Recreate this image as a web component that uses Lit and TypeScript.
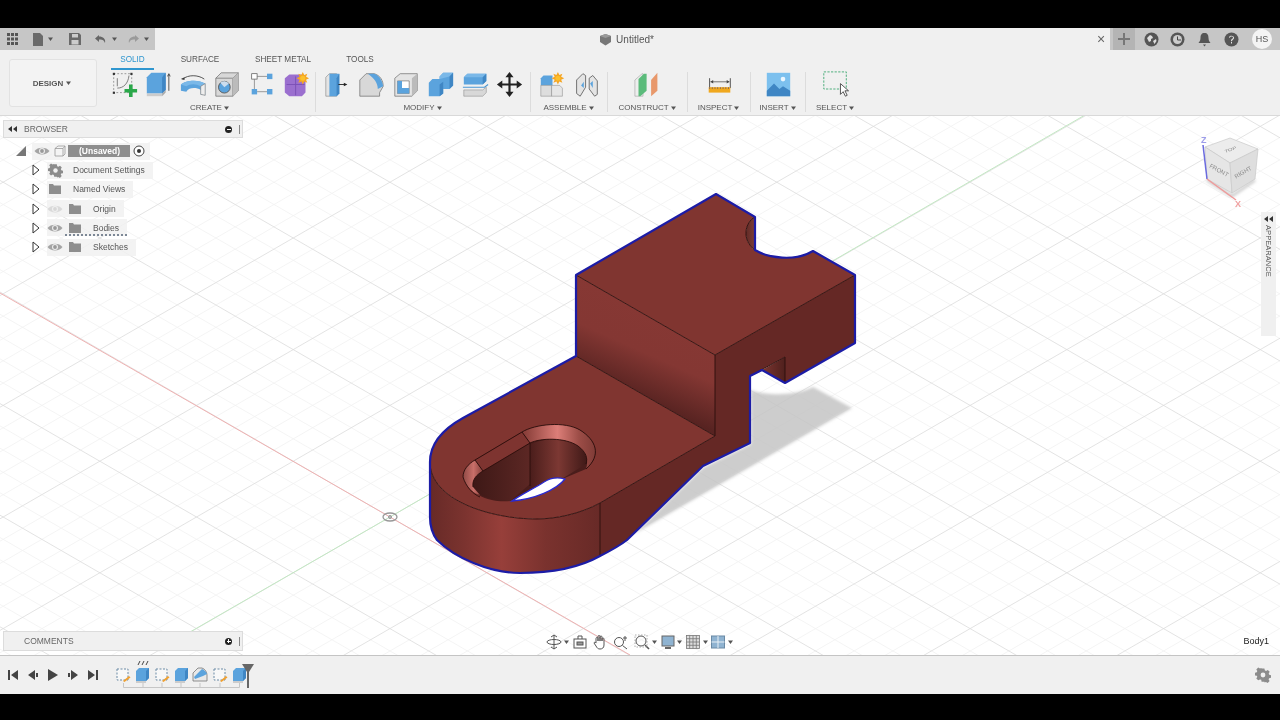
import { LitElement, html, svg, css } from 'lit';
import { customElement } from 'lit/decorators.js';

const BLUE = '#5ba3dd';
const BLUE_D = '#3f86c4';
const GREY = '#d8d8d8';
const EDGE = '#6e6e6e';

const caret = html`<svg class="caret" width="9" height="8" viewBox="0 0 9 8"><path d="M2 2.500h5L4.500 6z" fill="#555"/></svg>`;

// ribbon icons, all 30x30
const sun = (x: number, y: number) => svg`<g transform="translate(${x} ${y})"><path d="M0-7L1.600-3.600 5-5 3.600-1.600 7 0 3.600 1.600 5 5 1.600 3.600 0 7-1.600 3.600-5 5-3.600 1.600-7 0-3.600-1.600-5-5-1.600-3.600z" fill="#f5a623"/><circle r="2.800" fill="#fbc02d"/></g>`;

const ribbonIcons: Record<string, unknown> = {
  sketch: html`<svg width="30" height="30" viewBox="0 0 30 30"><rect x="3" y="3" width="20" height="21" fill="none" stroke="#777" stroke-dasharray="2 2" stroke-width=".8"/><path d="M7 8v9M7 19c7 0 12-5 13-14" fill="none" stroke="#666" stroke-width=".9"/><g fill="#333"><rect x="2" y="2" width="2.400" height="2.400"/><rect x="21.500" y="2" width="2.400" height="2.400"/><rect x="2" y="23" width="2.400" height="2.400"/></g><path d="M20 15h4v5h5v4h-5v5h-4v-5h-5v-4h5z" fill="#2aa84a"/></svg>`,
  extrude: html`<svg width="30" height="30" viewBox="0 0 30 30"><path d="M2 7l5-5h16v19l-4 4H2z" fill="${BLUE}"/><path d="M19 25V7l4-5v19z" fill="${BLUE_D}"/><path d="M2 25h17v3H2z" fill="#ccc"/><path d="M19 28v-3l4-4v3z" fill="#aaa"/><path d="M26.500 22V4M25 6l1.500-3L28 6" fill="none" stroke="#333" stroke-width=".9"/></svg>`,
  revolve: html`<svg width="30" height="30" viewBox="0 0 30 30"><path d="M1 15c5-5 20-6 27-1v13l-5-1v-5c-5-3-13-3-16 2l-6-1z" fill="${BLUE}"/><path d="M1 15c5-5 20-6 27-1l-5 3c-5-3-12-3-16 0z" fill="#7ab8e8"/><path d="M23 17l5-3v13l-5-1z" fill="#eee" stroke="#777" stroke-width=".7"/><path d="M3 9c6-5 17-5 24 0" fill="none" stroke="#444"/><path d="M1 9l4-2v3z" fill="#333"/></svg>`,
  hole: html`<svg width="30" height="30" viewBox="0 0 30 30"><path d="M2 8l6-6h19v20l-6 6H2z" fill="${GREY}" stroke="${EDGE}" stroke-width=".8"/><path d="M2 8h19v20M21 8l6-6" fill="none" stroke="${EDGE}" stroke-width=".8"/><path d="M21 8l6-6v20l-6 6z" fill="#bbb"/><circle cx="11.500" cy="18" r="6.500" fill="${BLUE}" stroke="#555"/><path d="M11.500 18l5-4A6.500 6.500 0 0 0 7 13z" fill="#cde"/></svg>`,
  pattern: html`<svg width="30" height="30" viewBox="0 0 30 30"><rect x="3" y="3" width="6" height="6" fill="#fff" stroke="#555" stroke-width=".8"/><rect x="20" y="3" width="6" height="6" fill="${BLUE}"/><rect x="3" y="20" width="6" height="6" fill="${BLUE}"/><rect x="20" y="20" width="6" height="6" fill="${BLUE}"/><path d="M9 6h11M9 23h11M6 9v11" stroke="#777" stroke-width=".8"/></svg>`,
  solid: html`<svg width="30" height="30" viewBox="0 0 30 30"><path d="M2 8l5-4h14l4 5v15l-4 4H7l-5-4z" fill="#9b6fcf"/><path d="M4 15h20M14 6v21" stroke="#7b4fb5"/>${sun(22, 8)}</svg>`,
  press: html`<svg width="30" height="30" viewBox="0 0 30 30"><path d="M2 7l4-4h8v25H2z" fill="#e4e4e4" stroke="#888" stroke-width=".7"/><path d="M6 3h11v22l-3 3H6z" fill="${BLUE}"/><path d="M14 28V8l3-5v22z" fill="${BLUE_D}"/><path d="M16 15h7" stroke="#222"/><path d="M22 13l4 2-4 2z" fill="#222"/></svg>`,
  fillet: html`<svg width="30" height="30" viewBox="0 0 30 30"><path d="M2 10l7-7h9c7 2 10 8 10 14l-4 7v4H2z" fill="${GREY}" stroke="${EDGE}" stroke-width=".8"/><path d="M11 3h7c6 2 9 8 10 14l-6 3c0-7-4-12-11-17z" fill="${BLUE}"/></svg>`,
  shell: html`<svg width="30" height="30" viewBox="0 0 30 30"><path d="M2 8l6-5h19v19l-6 6H2z" fill="#e4e4e4" stroke="${EDGE}" stroke-width=".8"/><path d="M21 8l6-5v19l-6 6z" fill="#bbb"/><path d="M5 11h13v14H5z" fill="#fff" stroke="#666" stroke-width=".7"/><path d="M5 11h5v8h8v6H5z" fill="${BLUE}"/></svg>`,
  combine: html`<svg width="30" height="30" viewBox="0 0 30 30"><path d="M2 13l4-4h8V6l4-4h11v14l-4 4h-7v5l-4 3H2z" fill="${BLUE}"/><path d="M14 9V6l4-4h11l-4 4z" fill="#7ab8e8"/><path d="M25 20V6l4-4v14zM14 28V15l4-3v13z" fill="${BLUE_D}"/></svg>`,
  split: html`<svg width="30" height="30" viewBox="0 0 30 30"><path d="M2 7l4-4h21v8l-4 4H2z" fill="${BLUE}"/><path d="M2 7h21l4-4H6z" fill="#7ab8e8"/><path d="M23 15V7l4-4v8z" fill="${BLUE_D}"/><path d="M1 18h24l4-3" fill="none" stroke="#4a97d3" stroke-width="1.200"/><path d="M2 21h21l4-3v6l-4 4H2z" fill="${GREY}" stroke="#888" stroke-width=".6"/></svg>`,
  move: html`<svg width="30" height="30" viewBox="0 0 30 30"><path d="M15 1l4.500 6H16.200v6.800H23V10.500l6 4.500-6 4.500v-3.300h-6.800V23h3.300L15 29l-4.500-6h3.300v-6.800H7v3.300L1 15l6-4.500v3.300h6.800V7h-3.300z" fill="#222"/></svg>`,
  component: html`<svg width="30" height="30" viewBox="0 0 30 30"><path d="M2 8l3-3h10v11H2z" fill="${BLUE}"/><path d="M2 16h12v12H2z" fill="#ddd" stroke="#888" stroke-width=".6"/><path d="M14 16h9l3 3v9H14z" fill="#e6e6e6" stroke="#888" stroke-width=".6"/>${sun(21, 8)}</svg>`,
  joint: html`<svg width="30" height="30" viewBox="0 0 30 30"><path d="M4 10l7-7 3 2v13l-6 10-4-3z" fill="#e4e4e4" stroke="#666"/><path d="M18 8l4-3 5 6v15l-3 2-6-8z" fill="#e4e4e4" stroke="#666"/><path d="M9 16l3-4v7zM19 14l3-3v8z" fill="${BLUE}"/></svg>`,
  construct: html`<svg width="30" height="30" viewBox="0 0 30 30"><path d="M1 10l8-7h1v25H1z" fill="#eee" stroke="#999" stroke-width=".6"/><path d="M5 9l6-6h3v19l-7 6H5z" fill="#5bbb7b"/><path d="M19 10l7-8v20l-7 6z" fill="#e8986b"/></svg>`,
  inspect: html`<svg width="30" height="30" viewBox="0 0 30 30"><path d="M4 8v11M27 8v11" stroke="#444"/><path d="M5 12h21" stroke="#444" stroke-width=".8"/><path d="M5 12l3-2v4zM26 12l-3-2v4z" fill="#444"/><rect x="3" y="18" width="24" height="6" fill="#f0a81e"/><path d="M4 18v2M7 18v2M10 18v2M13 18v2M16 18v2M19 18v2M22 18v2M25 18v2" stroke="#865"/></svg>`,
  insert: html`<svg width="30" height="30" viewBox="0 0 30 30"><rect x="2" y="2" width="26" height="26" fill="#7cc0ee"/><circle cx="20" cy="9" r="2.600" fill="#eaf6ff"/><path d="M2 22l8-8 6 6 4-3 8 5v6H2z" fill="#3f86c4"/></svg>`,
  select: html`<svg class="over" width="30" height="30" viewBox="0 0 30 30"><rect x="2" y="1" width="25" height="19" fill="none" stroke="#3fa873" stroke-dasharray="2.500 1.500"/><path d="M20.500 14v12l3-3 2.500 5 2-1-2.500-5h4z" fill="#fff" stroke="#333" stroke-width=".9"/></svg>`,
};

const groups = [
  { label: 'CREATE', width: 211, icons: ['sketch', 'extrude', 'revolve', 'hole', 'pattern', 'solid'], cls: '' },
  { label: 'MODIFY', width: 215, icons: ['press', 'fillet', 'shell', 'combine', 'split', 'move'], cls: '' },
  { label: 'ASSEMBLE', width: 77, icons: ['component', 'joint'], cls: '' },
  { label: 'CONSTRUCT', width: 80, icons: ['construct'], cls: '' },
  { label: 'INSPECT', width: 63, icons: ['inspect'], cls: '' },
  { label: 'INSERT', width: 55, icons: ['insert'], cls: '' },
  { label: 'SELECT', width: 60, icons: ['select'], cls: 'last' },
];

const eye = (faint = false) => html`<svg class="${faint ? 'faint' : ''}" width="16" height="12" viewBox="0 0 16 12"><path d="M.5 6C3.500 1.500 12.500 1.500 15.500 6 12.500 10.500 3.500 10.500.5 6z" fill="#a4a4a4"/><circle cx="8" cy="6" r="3" fill="#ececec"/><circle cx="8" cy="6" r="1.900" fill="#999"/></svg>`;
const folder = html`<svg width="16" height="12" viewBox="0 0 16 12"><path d="M2 1h4l1 1.500h7V11H2z" fill="#8e8e8e"/></svg>`;
const gear = (c = '#8c8c8c', s = 16) => html`<svg width="${s}" height="${s}" viewBox="0 0 16 16"><path d="M6.600 1h2.800l.4 2 1.200.6 1.800-1 1.900 2-1 1.700.5 1.200 1.800.6v2.800l-1.900.4-.5 1.200 1 1.700-1.900 2-1.800-1-1.200.5L9.400 15H6.600l-.4-2-1.200-.5-1.800 1-1.900-2 1-1.700-.5-1.200L0 8.400V5.600l1.800-.6.500-1.200-1-1.700 1.900-2 1.800 1 1.200-.6z" transform="translate(0 .5) scale(1 .95)" fill="${c}"/><circle cx="8" cy="8" r="2.400" fill="#f0f0f0"/></svg>`;
const chev = html`<svg width="10" height="12" viewBox="0 0 10 12"><path d="M2 1l6 5-6 5z" fill="#fff" stroke="#333" stroke-width="1"/></svg>`;

const treeRows = [
  { name: 'Document Settings', first: gear('#8c8c8c', 15), nested: false, dashed: false },
  { name: 'Named Views', first: folder, nested: false, dashed: false },
  { name: 'Origin', first: eye(true), nested: true, dashed: false },
  { name: 'Bodies', first: eye(), nested: true, dashed: true },
  { name: 'Sketches', first: eye(), nested: true, dashed: false },
];

// timeline feature icons
const tlSketch = html`<svg width="18" height="18" viewBox="0 0 18 18"><rect x="3" y="3" width="11" height="11" fill="#f8f8f8" stroke="#6a8aa5" stroke-dasharray="2 1.500"/><path d="M9 15l6-5 1.500 1.500-6 4.500z" fill="#f0a030"/></svg>`;
const tlExtrude = html`<svg width="18" height="18" viewBox="0 0 18 18"><path d="M3 5l3-3h10v10l-3 3H3z" fill="${BLUE}"/><path d="M13 15V5l3-3v10z" fill="${BLUE_D}"/><path d="M3 15h10v2H3z" fill="#ccc"/></svg>`;
const tlFillet = html`<svg width="18" height="18" viewBox="0 0 18 18"><path d="M2 7l5-5h4c3 1 5 4 5 7v6H2z" fill="#e8e8e8" stroke="#777" stroke-width=".8"/><path d="M3 11L11 3c3 1 4 3 5 5l-4 2-8 3z" fill="${BLUE}"/></svg>`;
const timelineItems = [tlSketch, tlExtrude, tlSketch, tlExtrude, tlFillet, tlSketch, tlExtrude];

// isometric floor grid around the origin at 390,517, in page coordinates
const ORIGIN = { x: 390, y: 517 };
const SLOPE = 55.8 / 96.7;
const STEP = 111.6 / 5;
function gridPaths() {
  let major = '';
  let minor = '';
  for (const dir of [1, -1]) {
    for (let k = -70; k <= 70; k++) {
      const y0 = ORIGIN.y + dir * SLOPE * (0 - ORIGIN.x) + k * STEP;
      const y1 = ORIGIN.y + dir * SLOPE * (1280 - ORIGIN.x) + k * STEP;
      const seg = `M0 ${y0.toFixed(1)}L1280 ${y1.toFixed(1)}`;
      if (k % 5 === 0) major += seg;
      else minor += seg;
    }
  }
  return { major, minor };
}

@customElement('app-root')
export class AppRoot extends LitElement {
  static styles = css`
    :host {
      display: block;
      width: 1280px;
      height: 720px;
      overflow: hidden;
      background: #000;
      font-family: 'Liberation Sans', Arial, sans-serif;
      color: #555;
      filter: blur(.3px);
    }
    .black { height: 28px; background: #000; }
    .black.bottom { height: 26px; }
    svg { display: block; flex: none; }

    .titlebar { display: flex; height: 22px; background: #c6c6c6; }
    .qa { width: 155px; display: flex; align-items: center; padding-left: 6px; box-sizing: border-box; }
    .qa .caret { margin-left: 2px; }
    .qa .m7 { margin-left: 7px; }
    .qa .m12 { margin-left: 12px; }
    .qa .m13 { margin-left: 13px; }
    .tab { flex: 1; display: flex; align-items: center; background: #f0f0f0; }
    .title { flex: 1; display: flex; align-items: center; justify-content: center; gap: 4px; font-size: 10px; padding-left: 6px; }
    .close { width: 18px; font-size: 14px; color: #666; text-align: center; }
    .actions { width: 170px; display: flex; align-items: center; }
    .plus { width: 22px; height: 22px; margin-left: 3px; background: #b4b4b4; display: flex; align-items: center; justify-content: center; }
    .act { margin-left: 11.700px; }
    .plus + .act { margin-left: 8.500px; }
    .avatar { width: 20px; height: 20px; border-radius: 50%; background: #f4f4f4; font-size: 9px; line-height: 20px; text-align: center; margin-left: 13.500px; color: #555; }

    .ribbon { display: flex; height: 65px; background: #f0f0f0; border-bottom: 1px solid #d9d9d9; }
    .design { width: 88px; height: 48px; margin: 9px 0 0 9px; box-sizing: border-box; border: 1px solid #e2e2e2; border-radius: 3px; background: #f3f3f3; display: flex; align-items: center; justify-content: center; gap: 1px; font-size: 8px; font-weight: bold; color: #555; }
    .rcol { margin-left: 8px; }
    .tabs { display: grid; grid-template-columns: 43px 92px 74px 80px; height: 20px; margin-left: 6px; font-size: 8.200px; text-align: center; line-height: 19px; }
    .tabs .on { color: #2f96cf; border-bottom: 2px solid #2f96cf; height: 18px; }
    .groups { display: flex; height: 44px; }
    .group { position: relative; box-sizing: border-box; display: flex; flex-direction: column; align-items: center; }
    .group::after { content: ''; position: absolute; right: 0; top: 2px; bottom: 2px; width: 1px; background: #dcdcdc; }
    .group.last::after { display: none; }
    .icons { display: flex; flex: none; height: 30px; padding-top: 1px; }
    .icon { width: 34.400px; display: flex; justify-content: center; }
    .icon svg { width: 27px; height: 27px; }
    .icon svg.over { overflow: visible; }
    .glabel { display: flex; flex: none; align-items: center; height: 13px; font-size: 8px; color: #555; }

    .view { position: relative; height: 539px; background: #fff; overflow: hidden; }
    .scene { position: absolute; inset: 0; }

    .panel { position: absolute; left: 3px; width: 240px; box-sizing: border-box; background: #f0f0f0; border: 1px solid #dcdcdc; display: flex; align-items: center; font-size: 8.500px; color: #666; }
    .browser { top: 4px; height: 18px; }
    .comments { top: 515px; height: 20px; }
    .panel .back { width: 18px; margin-left: 1px; padding-left: 3px; box-sizing: border-box; }
    .panel .name { flex: 1; margin-left: 1px; }
    .panel .bar { width: 1px; height: 9px; background: #888; margin: 0 2px 0 7px; }
    .dot { width: 7px; height: 7px; border-radius: 50%; background: #222; position: relative; }
    .dot::after { content: ''; position: absolute; left: 1.500px; right: 1.500px; top: 3px; height: 1px; background: #fff; }
    .dot.add::before { content: ''; position: absolute; top: 1.500px; bottom: 1.500px; left: 3px; width: 1px; background: #fff; }

    .tree { position: absolute; left: 0; top: 25.500px; font-size: 8.500px; color: #555; }
    .row { display: flex; align-items: center; height: 19.200px; padding-left: 31px; }
    .item { position: relative; display: flex; align-items: center; height: 17px; margin-left: 6px; background: rgba(241, 241, 241, .85); padding-right: 8px; }
    .item .slot { width: 16px; display: flex; justify-content: center; }
    .item .slot2 { margin-left: 4px; }
    .item .txt { margin-left: 10px; }
    .item.dashed::after { content: ''; position: absolute; left: 18px; right: 0; bottom: 0; border-bottom: 2px dotted #7d8896; }
    .faint { opacity: .3; }
    .root { padding-left: 16px; }
    .root .item { margin-left: 6px; padding: 0 5px 0 1px; }
    .root .item .slot { width: 18px; }
    .unsaved { display: flex; align-items: center; width: 78px; height: 12px; margin-left: 1px; background: #8e8e8e; color: #fff; font-weight: bold; }
    .unsaved span { margin-left: 11px; }
    .radio { margin-left: 3px; }

    .cubeview { position: absolute; right: 21px; top: 14px; }
    .side { position: absolute; right: 4px; top: 96px; width: 15px; height: 124px; background: #f0f0f0; display: flex; flex-direction: column; align-items: center; padding-top: 4px; box-sizing: border-box; }
    .side span { writing-mode: vertical-rl; font-size: 7.600px; margin-top: 3px; color: #555; }

    .nav { position: absolute; left: 546px; top: 517px; display: flex; align-items: center; height: 17px; }
    .nav .caret { width: 9px; }
    .m1 { margin-left: 1px; }
    .m4 { margin-left: 4px; }
    .m5 { margin-left: 5px; }
    .mn1 { margin-left: -1px; }
    .body-name { position: absolute; right: 11px; top: 520px; font-size: 9px; color: #222; }

    .timeline { display: flex; align-items: center; height: 39px; box-sizing: border-box; background: #f0f0f0; border-top: 1px solid #c4c4c4; padding-left: 3px; }
    .ctrl { width: 20px; display: flex; justify-content: center; }
    .features { position: relative; display: flex; margin-left: 10.500px; height: 36px; align-items: center; }
    .feat { width: 19.300px; display: flex; justify-content: center; }
    .rail { position: absolute; left: 9.500px; top: 26px; }
    .hatch { position: absolute; left: 23px; top: 3px; }
    .scrub { position: absolute; left: 128.500px; top: 7px; }
    .tgear { margin-left: auto; margin-right: 9px; }
  `;

  renderTitlebar() {
    return html`<div class="titlebar">
      <div class="qa">
        <svg width="14" height="12" viewBox="0 0 14 12" fill="#555"><path d="M1 0h3v3H1zM5 0h3v3H5zM9 0h3v3H9zM1 4.500h3v3H1zM5 4.500h3v3H5zM9 4.500h3v3H9zM1 9h3v3H1zM5 9h3v3H5zM9 9h3v3H9z"/></svg>
        <svg class="m12" width="12" height="14" viewBox="0 0 12 14"><path d="M1 1h7l3 3v10H1z" fill="#6a6a6a"/></svg>
        ${caret}
        <svg class="m13" width="14" height="14" viewBox="0 0 14 14"><path d="M1 1h10l2 2v10H1z" fill="#6a6a6a"/><rect x="4" y="2" width="6" height="3.500" fill="#ccc"/><rect x="3.500" y="8" width="7" height="4.500" fill="#ccc"/></svg>
        <svg class="m12" width="14" height="12" viewBox="0 0 14 12"><path d="M5 2L1 5.500 5 9V6.500c3-.5 5 .5 6 3.500 1-4-2-6.500-6-6.500z" fill="#666"/></svg>
        ${caret}
        <svg class="m7" width="14" height="12" viewBox="0 0 14 12"><path d="M9 2l4 3.500L9 9V6.500c-3-.5-5 .5-6 3.500-1-4 2-6.500 6-6.500z" fill="#9a9a9a"/></svg>
        ${caret}
      </div>
      <div class="tab">
        <div class="title">
          <svg width="13" height="13" viewBox="0 0 13 13"><path d="M1 3l5.500-2L12 3v6l-5.500 3.500L1 9z" fill="#777"/><path d="M1 3l5.500 2L12 3 6.500 1z" fill="#999"/></svg>
          <span>Untitled*</span>
        </div>
        <div class="close">×</div>
      </div>
      <div class="actions">
        <div class="plus"><svg width="12" height="12" viewBox="0 0 12 12"><path d="M5 0h2v5h5v2H7v5H5V7H0V5h5z" fill="#777"/></svg></div>
        <svg class="act" width="15" height="15" viewBox="0 0 15 15"><circle cx="7.500" cy="7.500" r="7" fill="#555"/><path d="M3 6l3-3 2 1 1 2-2 1v2l-2 1-1-2zM9 9l3-2 .5 2-2 3z" fill="#ddd"/></svg>
        <svg class="act" width="15" height="15" viewBox="0 0 15 15"><circle cx="7.500" cy="7.500" r="7" fill="#555"/><circle cx="7.500" cy="7.500" r="4.500" fill="#ccc"/><path d="M7.500 4.500v3.500H11" fill="none" stroke="#444"/></svg>
        <svg class="act" width="15" height="15" viewBox="0 0 15 15"><path d="M7.500 1c-3 0-4 2-4 5 0 3-1.500 4-2 5h12c-.5-1-2-2-2-5 0-3-1-5-4-5z" fill="#555"/><path d="M6 12.500h3L7.500 14.500z" fill="#555"/></svg>
        <svg class="act" width="15" height="15" viewBox="0 0 15 15"><circle cx="7.500" cy="7.500" r="7" fill="#555"/><path d="M5 5.500C5 3 10 3 10 5.700c0 2-2 1.800-2 3.500H7c0-2.500 2-2.300 2-3.700C9 4.300 6 4.300 6 5.700z" fill="#e8e8e8"/><rect x="7" y="10" width="1" height="1.500" fill="#e8e8e8"/></svg>
        <div class="avatar">HS</div>
      </div>
    </div>`;
  }

  renderRibbon() {
    return html`<div class="ribbon">
      <div class="design">DESIGN ${caret}</div>
      <div class="rcol">
        <div class="tabs">
          <div class="on">SOLID</div><div>SURFACE</div><div>SHEET METAL</div><div>TOOLS</div>
        </div>
        <div class="groups">
          ${groups.map(g => html`<div class="group ${g.cls}" style="width:${g.width}px">
            <div class="icons">${g.icons.map(i => html`<div class="icon">${ribbonIcons[i]}</div>`)}</div>
            <div class="glabel">${g.label} ${caret}</div>
          </div>`)}
        </div>
      </div>
    </div>`;
  }

  renderScene() {
    const { major, minor } = gridPaths();
    const line = '#2a0d0b';
    return html`<svg class="scene" width="1280" height="539" viewBox="0 116 1280 539">
      <defs>
        <filter id="soft" x="-10%" y="-10%" width="120%" height="120%"><feGaussianBlur stdDeviation="1.500"/></filter>
        <linearGradient id="front" gradientUnits="userSpaceOnUse" x1="430" y1="0" x2="600" y2="0">
          <stop offset="0" stop-color="#672a27"/><stop offset=".2" stop-color="#7b332f"/><stop offset=".42" stop-color="#973f3a"/>
          <stop offset=".68" stop-color="#7a322e"/><stop offset="1" stop-color="#682a27"/>
        </linearGradient>
        <linearGradient id="wall" gradientUnits="userSpaceOnUse" x1="660" y1="300" x2="620" y2="390">
          <stop offset="0" stop-color="#873834"/><stop offset=".55" stop-color="#843733"/><stop offset="1" stop-color="#572321"/>
        </linearGradient>
        <linearGradient id="notch" gradientUnits="userSpaceOnUse" x1="744" y1="0" x2="756" y2="0">
          <stop offset="0" stop-color="#5a2522"/><stop offset="1" stop-color="#804039"/>
        </linearGradient>
        <linearGradient id="slotR" gradientUnits="userSpaceOnUse" x1="530" y1="0" x2="587" y2="0">
          <stop offset="0" stop-color="#4a1d1b"/><stop offset=".5" stop-color="#7c3833"/><stop offset="1" stop-color="#3f1917"/>
        </linearGradient>
        <linearGradient id="slotL" gradientUnits="userSpaceOnUse" x1="473" y1="0" x2="530" y2="0">
          <stop offset="0" stop-color="#3d1816"/><stop offset="1" stop-color="#5c2724"/>
        </linearGradient>
        <linearGradient id="chamfer" gradientUnits="userSpaceOnUse" x1="525" y1="0" x2="597" y2="0">
          <stop offset="0" stop-color="#8a3f3a"/><stop offset=".45" stop-color="#dc7e78"/><stop offset=".75" stop-color="#9c4d47"/><stop offset="1" stop-color="#7d3a35"/>
        </linearGradient>
        <linearGradient id="chamferL" gradientUnits="userSpaceOnUse" x1="463" y1="0" x2="484" y2="0">
          <stop offset="0" stop-color="#8f4a45"/><stop offset=".5" stop-color="#c96f69"/><stop offset="1" stop-color="#7d3a35"/>
        </linearGradient>
        <linearGradient id="inner" gradientUnits="userSpaceOnUse" x1="762" y1="0" x2="785" y2="0">
          <stop offset="0" stop-color="#7d3631"/><stop offset="1" stop-color="#4f201d"/>
        </linearGradient>
      </defs>

      <path d="${minor}" stroke="#f1f1f1" stroke-width=".8" fill="none"/>
      <path d="${major}" stroke="#dcdcdc" stroke-width=".8" fill="none"/>
      <path d="M0 293L390 517L630 655" stroke="#efb1b1" stroke-width="1" fill="none"/>
      <path d="M190 632L390 517L1085 115" stroke="#c3e8c3" stroke-width="1" fill="none"/>
      <g fill="none" stroke="#999"><ellipse cx="390" cy="517" rx="7" ry="4" stroke-width="1.300"/><circle cx="390" cy="517" r="1.500" fill="#bbb"/></g>

      <path d="M751 390C765 396 795 396 813 387L852 408L634 534L703 468L751 444Z" fill="#c4c4c4" fill-opacity=".85" filter="url(#soft)"/>

      <!-- right faces -->
      <path d="M715 355L855 275V343L785 383V357L750 376V443L703 466L627 540C618 547 608 552 600 556V503L715 436Z" fill="#652825"/>
      <path d="M762 370L785 357V383Z" fill="url(#inner)"/>
      <!-- block wall -->
      <path d="M576 275L715 355V436L576 356Z" fill="url(#wall)"/>
      <!-- block top -->
      <path d="M576 275L716 194L755 217C745 222 741 240 755 250C768 258 795 262 813 251L855 275L715 355Z" fill="#803530"/>
      <path d="M755 217C745 222 741 240 755 250Z" fill="url(#notch)"/>
      <!-- plate top -->
      <path d="M576 356L715 436L600 503C580 514 555 519 537 519C490 519 430 500 430 462C430 442 445 428 463 418Z" fill="#803530"/>
      <!-- round front -->
      <path d="M430 462C430 500 490 519 537 519C555 519 580 514 600 503V556C575 570 545 573 520 573C490 573 455 558 437 540C431 532 430 525 430 517Z" fill="url(#front)"/>

      <!-- slot -->
      <path d="M475 460L522 432C535 424 565 421 580 430C596 440 602 455 586 469L510 501C490 503 470 495 463 477C463 470 468 464 475 460Z" fill="#4a1d1b"/>
      <path d="M530 445C540 438 565 437 578 446C586 452 588 458 586 464L560 480L530 490Z" fill="url(#slotR)"/>
      <path d="M483 471L530 443V484L510 501C495 500 478 498 473 487C472 480 476 475 483 471Z" fill="url(#slotL)"/>
      <path d="M522 432C535 424 565 421 580 430C596 440 602 455 586 469C589 460 586 452 578 446C565 437 540 438 530 443Z" fill="url(#chamfer)"/>
      <path d="M475 460L483 471C476 475 472 480 473 487L480 495C470 492 465 484 463 477C463 470 468 464 475 460Z" fill="url(#chamferL)"/>
      <path d="M475 460L522 432L530 443L483 471Z" fill="#7e3430"/>
      <path d="M512 501C522 494 533 489 544 482C550 478 558 477 565 479C556 490 535 499 512 501Z" fill="#fff" stroke="#2a2ad0" stroke-width="1.300"/>

      <!-- edges -->
      <g fill="none" stroke="${line}" stroke-width=".9">
        <path d="M576 275L715 355L855 275M715 355V436M576 356L715 436M600 503V556M785 357V383M750 376L785 357"/>
        <path d="M755 217C745 222 741 240 755 250"/>
        <path d="M430 462C430 500 490 519 537 519C555 519 580 514 600 503L715 436"/>
        <path d="M475 460L522 432C535 424 565 421 580 430C596 440 602 455 586 469M475 460C468 464 463 470 463 477C466 487 473 494 480 497"/>
        <path d="M522 432L530 443M475 460L483 471M483 471L530 443C540 438 565 437 578 446C586 452 588 458 586 464M483 471C476 475 472 480 473 487M530 443V486"/>
      </g>
      <path d="M576 275L716 194L755 217V250C768 258 795 262 813 251L855 275V343L785 383L762 370L750 376V443L703 466L627 540C618 547 608 552 600 556C575 570 545 573 520 573C490 573 455 558 437 540C431 532 430 525 430 517V462C430 442 445 428 463 418L576 356Z" fill="none" stroke="#1c1ca6" stroke-width="2.200" stroke-linejoin="round"/>
    </svg>`;
  }

  renderCube() {
    return html`<svg class="cubeview" width="62" height="80" viewBox="0 0 62 80">
      <defs><filter id="cs"><feGaussianBlur stdDeviation="1.500"/></filter></defs>
      <path d="M10 50L35 66L58 50" fill="none" stroke="#ccc" stroke-width="3" filter="url(#cs)"/>
      <path d="M33 8L61 19L33 33L8 17Z" fill="#ececec" stroke="#c9c9c9" stroke-width=".7"/>
      <path d="M8 17L33 33L35 63L10 49Z" fill="#e6e6e6" stroke="#c9c9c9" stroke-width=".7"/>
      <path d="M33 33L61 19L58 49L35 63Z" fill="#dedede" stroke="#c9c9c9" stroke-width=".7"/>
      <g fill="#8a8a8a" font-size="6" font-family="Liberation Sans, sans-serif" text-anchor="middle">
        <text transform="translate(34 21) rotate(-20) scale(1 .7)">TOP</text>
        <text transform="translate(21 42) rotate(28)">FRONT</text>
        <text transform="translate(47 44) rotate(-30)">RIGHT</text>
      </g>
      <path d="M6 15L10 49" stroke="#6a6adf" stroke-width="1.500"/>
      <path d="M10 49L39 70" stroke="#ef9a9a" stroke-width="1.500"/>
      <text x="4" y="13" font-size="9" font-weight="bold" font-family="Liberation Sans, sans-serif" fill="#9d9dea">Z</text>
      <text x="38" y="77" font-size="9" font-weight="bold" font-family="Liberation Sans, sans-serif" fill="#f0a0a0">X</text>
    </svg>`;
  }

  renderNav() {
    return html`<div class="nav">
      <svg width="16" height="16" viewBox="0 0 16 16" fill="none" stroke="#555"><path d="M8 1v14M5 3l3-2 3 2M5 13l3 2 3-2"/><ellipse cx="8" cy="8" rx="7" ry="2.500"/></svg>${caret}
      <svg class="m1" width="16" height="16" viewBox="0 0 16 16" fill="none" stroke="#555"><rect x="2" y="5" width="12" height="9"/><rect x="5" y="8" width="6" height="3" fill="#999"/><path d="M6 5V2h4v3"/></svg>
      <svg class="m4" width="16" height="16" viewBox="0 0 16 16" fill="none" stroke="#555"><path d="M4 9V4.500a1 1 0 0 1 2 0V7V2.500a1 1 0 0 1 2 0V7V3a1 1 0 0 1 2 0v4V5a1 1 0 0 1 2 0v6c0 3-2 4-4 4s-3-1-4-3L2 9c0-1 1.500-1 2 0z"/></svg>
      <svg class="m5" width="16" height="16" viewBox="0 0 16 16" fill="none" stroke="#555"><circle cx="6" cy="8" r="4.500"/><path d="M9.500 11.500L14 15M12 2v5M10 4h4" /></svg>
      <svg class="m5" width="16" height="16" viewBox="0 0 16 16" fill="none" stroke="#555"><circle cx="7" cy="7" r="5"/><path d="M11 11l4 4" stroke-width="1.600"/><rect x="1" y="1" width="12" height="12" stroke="#999" stroke-dasharray="1.500 1.500" stroke-width=".8"/></svg>${caret}
      <svg class="m1" width="16" height="16" viewBox="0 0 16 16"><rect x="2" y="2" width="12" height="10" fill="#8fb3d1" stroke="#666"/><path d="M5 14h6" stroke="#666" stroke-width="2"/></svg>
      <span class="mn1">${caret}</span>
      <svg class="m1" width="16" height="16" viewBox="0 0 16 16" fill="#ddd" stroke="#777" stroke-width=".8"><rect x="1.500" y="1.500" width="13" height="13"/><path d="M4.700 1.500v13M8 1.500v13M11.300 1.500v13M1.500 4.700h13M1.500 8h13M1.500 11.300h13" fill="none"/></svg>${caret}
      <svg width="16" height="16" viewBox="0 0 16 16"><rect x="1.500" y="2" width="13" height="12" fill="#8fb3d1" stroke="#6a8aa5"/><path d="M8 2v12M1.500 8h13" stroke="#e8f0f6"/></svg>${caret}
    </div>`;
  }

  renderTimeline() {
    return html`<div class="timeline">
      <div class="ctrl"><svg width="12" height="12" viewBox="0 0 12 12" fill="#444"><path d="M1 1h2v10H1zM11 1v10L4 6z"/></svg></div>
      <div class="ctrl"><svg width="12" height="12" viewBox="0 0 12 12" fill="#444"><path d="M8 1v10L1 6zM9 4h2v4H9z"/></svg></div>
      <div class="ctrl"><svg width="12" height="14" viewBox="0 0 12 14" fill="#444"><path d="M1 1v12l10-6z"/></svg></div>
      <div class="ctrl"><svg width="12" height="12" viewBox="0 0 12 12" fill="#444"><path d="M4 1v10l7-5zM1 4h2v4H1z"/></svg></div>
      <div class="ctrl"><svg width="12" height="12" viewBox="0 0 12 12" fill="#444"><path d="M1 1v10l7-5zM9 1h2v10H9z"/></svg></div>
      <div class="features">
        ${timelineItems.map(t => html`<div class="feat">${t}</div>`)}
        <svg class="rail" width="118" height="5" viewBox="0 0 118 5" fill="none" stroke="#c6c6c6"><path d="M.5 0v4.500h116M20 0v4M39 0v4M58 0v4M77 0v4M97 0v4M116.500 0v4.500"/></svg>
        <svg class="hatch" width="14" height="6" viewBox="0 0 14 6" fill="none" stroke="#444"><path d="M1 5l2-4M5 5l2-4M9 5l2-4"/></svg>
        <svg class="scrub" width="12" height="24" viewBox="0 0 12 24"><path d="M0 0h12L7 8v16H5V8z" fill="#666"/></svg>
      </div>
      <div class="tgear">${gear('#8c8c8c', 16)}</div>
    </div>`;
  }

  render() {
    const back = html`<svg width="9" height="6" viewBox="0 0 9 6" fill="#333"><path d="M4 0v6L0 3zM9 0v6L5 3z"/></svg>`;
    return html`
      <div class="black"></div>
      ${this.renderTitlebar()}
      ${this.renderRibbon()}
      <div class="view">
        ${this.renderScene()}
        <div class="panel browser">
          <div class="back">${back}</div>
          <div class="name">BROWSER</div><div class="dot"></div><div class="bar"></div>
        </div>
        <div class="tree">
          <div class="row root">
            <svg width="10" height="10" viewBox="0 0 10 10"><path d="M0 10L10 0v10z" fill="#777"/></svg>
            <div class="item">
              <div class="slot">${eye()}</div>
              <div class="unsaved">
                <svg width="16" height="12" viewBox="0 0 16 12"><rect width="16" height="12" fill="#f4f4f4"/><path d="M3 3.500L6 1h7v8l-2 2H3zM3 3.500h8V11M11 3.500L13 1" fill="none" stroke="#999" stroke-width=".8"/></svg>
                <span>(Unsaved)</span>
              </div>
              <svg class="radio" width="12" height="12" viewBox="0 0 12 12"><circle cx="6" cy="6" r="5" fill="#fff" stroke="#444"/><circle cx="6" cy="6" r="2" fill="#333"/></svg>
            </div>
          </div>
          ${treeRows.map(r => html`<div class="row">
            ${chev}
            <div class="item ${r.dashed ? 'dashed' : ''}">
              <div class="slot">${r.first}</div>
              ${r.nested ? html`<div class="slot slot2">${folder}</div>` : ''}
              <div class="txt">${r.name}</div>
            </div>
          </div>`)}
        </div>
        ${this.renderCube()}
        <div class="side">${back}<span>APPEARANCE</span></div>
        <div class="panel comments">
          <div class="back"></div><div class="name">COMMENTS</div><div class="dot add"></div><div class="bar"></div>
        </div>
        ${this.renderNav()}
        <div class="body-name">Body1</div>
      </div>
      ${this.renderTimeline()}
      <div class="black bottom"></div>
    `;
  }
}
